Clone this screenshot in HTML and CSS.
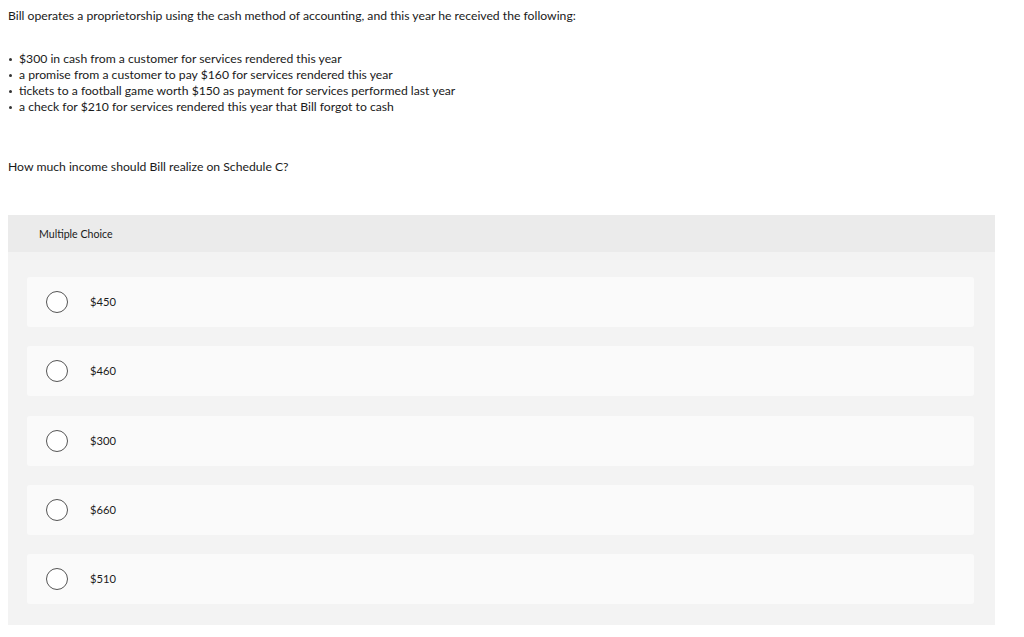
FILE: index.html
```html
<!DOCTYPE html>
<html>
<head>
<meta charset="utf-8">
<link rel="stylesheet" href="styles.css">
</head>
<body>
<p class="intro">Bill operates a proprietorship using the cash method of accounting, and this year he received the following:</p>
<ul class="items">
  <li>$300 in cash from a customer for services rendered this year</li>
  <li>a promise from a customer to pay $160 for services rendered this year</li>
  <li>tickets to a football game worth $150 as payment for services performed last year</li>
  <li>a check for $210 for services rendered this year that Bill forgot to cash</li>
</ul>
<p class="question">How much income should Bill realize on Schedule C?</p>
<section class="mc">
  <div class="mc-head">Multiple Choice</div>
  <div class="options">
    <div class="option"><span class="radio"></span><span class="label">$450</span></div>
    <div class="option"><span class="radio"></span><span class="label">$460</span></div>
    <div class="option"><span class="radio"></span><span class="label">$300</span></div>
    <div class="option"><span class="radio"></span><span class="label">$660</span></div>
    <div class="option"><span class="radio"></span><span class="label">$510</span></div>
  </div>
</section>
</body>
</html>
```
FILE: styles.css
```css
html, body { background: #fff; }
body {
  margin: 8px;
  font-family: Lato, "Liberation Sans", sans-serif;
  font-size: 12.2px;
  line-height: 16px;
  color: #1a1a1a;
  width: 987px;
}
p { margin: 0; }
.items {
  margin: 27px 0 0 0;
  padding: 0 0 0 11px;
  list-style: none;
}
.items li { position: relative; }
.items li::before {
  content: "";
  position: absolute;
  left: -10px;
  top: 7px;
  width: 3px;
  height: 3px;
  border-radius: 50%;
  background: #333;
}
.question { margin-top: 44px; }
.mc {
  margin-top: 40px;
  background: #f3f3f3;
  padding-bottom: 21px;
}
.mc-head {
  background: #ebebeb;
  height: 37px;
  display: flex;
  align-items: center;
  padding-left: 31px;
  font-size: 10.6px;
}
.options {
  display: flex;
  flex-direction: column;
  gap: 19.25px;
  margin: 25px 21px 0 19px;
}
.option {
  height: 50px;
  background: #fafafa;
  border-radius: 3px;
  display: flex;
  align-items: center;
  padding-left: 19px;
}
.radio {
  width: 20px;
  height: 20px;
  border: 1px solid #555;
  border-radius: 50%;
  background: #fff;
  flex: none;
}
.label {
  margin-left: 22px;
  font-size: 11.2px;
}
```
